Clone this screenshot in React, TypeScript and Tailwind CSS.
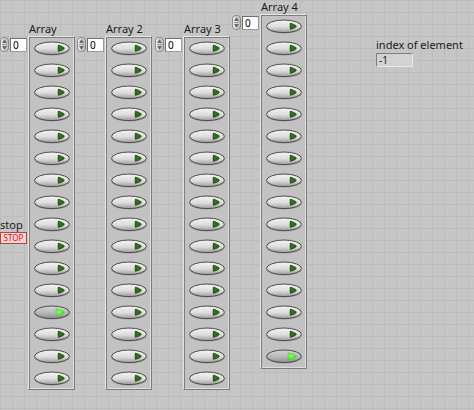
import React from "react";

const font = { fontFamily: '"Noto Sans", "DejaVu Sans", sans-serif' };

function LedDefs() {
  return (
    <svg width="0" height="0" className="absolute">
      <defs>
        <linearGradient id="ledBody" x1="0" y1="0" x2="0" y2="1">
          <stop offset="0" stopColor="#f4f4f4" />
          <stop offset="0.55" stopColor="#dcdcdc" />
          <stop offset="1" stopColor="#9c9c9c" />
        </linearGradient>
        <linearGradient id="ledBodyOn" x1="0" y1="0" x2="0" y2="1">
          <stop offset="0" stopColor="#d6d6d6" />
          <stop offset="0.6" stopColor="#b4b4b4" />
          <stop offset="1" stopColor="#8a8a8a" />
        </linearGradient>
        <radialGradient id="ledGreen" cx="0.4" cy="0.45" r="0.7">
          <stop offset="0" stopColor="#347a24" />
          <stop offset="1" stopColor="#1a4410" />
        </radialGradient>
        <radialGradient id="ledGreenOn" cx="0.4" cy="0.45" r="0.7">
          <stop offset="0" stopColor="#8dff6a" />
          <stop offset="1" stopColor="#28c814" />
        </radialGradient>
      </defs>
    </svg>
  );
}

function Led({ on }: { on?: boolean }) {
  return (
    <svg width="38" height="15" viewBox="0 0 38 15" className="block">
      <ellipse cx="19" cy="8" rx="18" ry="6.6" fill="#8e8e8e" opacity="0.6" />
      <ellipse
        cx="19"
        cy="7.3"
        rx="17.4"
        ry="6.3"
        fill={on ? "url(#ledBodyOn)" : "url(#ledBody)"}
        stroke="#4c4c4c"
        strokeWidth="1"
      />
      {on ? (
        <path d="M23 3.4 Q29 4 31.5 7.3 Q29 10.6 23 11.2 Q21.5 7.3 23 3.4Z" fill="url(#ledGreenOn)" />
      ) : (
        <path d="M25 3.8 Q30 4.8 31.8 7.3 Q30 9.8 25 10.8 Q24.2 7.3 25 3.8Z" fill="url(#ledGreen)" />
      )}
    </svg>
  );
}

function Spinner() {
  return (
    <div className="flex h-[15px] w-[9px] flex-col items-center justify-between rounded-[4px] border border-[#8a8a8a] bg-gradient-to-r from-[#f2f2f2] to-[#bdbdbd] py-[1px]">
      <svg width="5" height="4" viewBox="0 0 5 4">
        <path d="M2.5 0 L5 4 L0 4Z" fill="#6a6a6a" />
      </svg>
      <div className="h-px w-[5px] bg-[#9a9a9a]" />
      <svg width="5" height="4" viewBox="0 0 5 4">
        <path d="M0 0 L5 0 L2.5 4Z" fill="#6a6a6a" />
      </svg>
    </div>
  );
}

function IndexControl() {
  return (
    <div className="flex items-center gap-[1px]">
      <Spinner />
      <div className="flex h-[14px] w-[17px] items-center border border-[#9a9a9a] border-t-[#707070] border-l-[#707070] bg-white pl-[2px] text-[10px] leading-none text-black">
        0
      </div>
    </div>
  );
}

function ArrayFrame({ count, lit, height }: { count: number; lit: number; height: string }) {
  return (
    <div
      className={`flex w-[47px] flex-col items-center gap-[7px] border border-[#e6e6e6] border-r-[#7c7c7c] border-b-[#7c7c7c] bg-[#c2c2c2] pt-[4px] shadow-[inset_1px_1px_0_#7e7e7e,inset_-1px_-1px_0_#dedede] ${height}`}
    >
      {Array.from({ length: count }).map((_, i) => (
        <Led key={i} on={i === lit} />
      ))}
    </div>
  );
}

export default function App() {
  return (
    <div
      className="relative h-[410px] w-[474px] overflow-hidden bg-[#c6c6c6] bg-[linear-gradient(to_right,#bcbcbc_1px,transparent_1px),linear-gradient(to_bottom,#bcbcbc_1px,transparent_1px)] bg-[size:12px_12px] text-[11px] text-[#1a1a1a]"
      style={font}
    >
      <LedDefs />

      {/* Array */}
      <div className="absolute left-0 top-[22px] flex items-start">
        <div className="mt-[15px]">
          <IndexControl />
        </div>
        <div className="ml-[1px] flex flex-col">
          <span className="pl-[1px] leading-[14px]">Array</span>
          <ArrayFrame count={16} lit={12} height="h-[354px]" />
        </div>
      </div>

      {/* Array 2 */}
      <div className="absolute left-[77px] top-[22px] flex items-start">
        <div className="mt-[15px]">
          <IndexControl />
        </div>
        <div className="ml-[1px] flex flex-col">
          <span className="pl-[1px] leading-[14px]">Array 2</span>
          <ArrayFrame count={16} lit={-1} height="h-[354px]" />
        </div>
      </div>

      {/* Array 3 */}
      <div className="absolute left-[155px] top-[22px] flex items-start">
        <div className="mt-[15px]">
          <IndexControl />
        </div>
        <div className="ml-[1px] flex flex-col">
          <span className="pl-[1px] leading-[14px]">Array 3</span>
          <ArrayFrame count={16} lit={-1} height="h-[354px]" />
        </div>
      </div>

      {/* Array 4 */}
      <div className="absolute left-[232px] top-0 flex items-start">
        <div className="mt-[15px]">
          <IndexControl />
        </div>
        <div className="ml-[1px] flex flex-col">
          <span className="pl-[1px] leading-[14px]">Array 4</span>
          <ArrayFrame count={16} lit={15} height="h-[355px]" />
        </div>
      </div>

      {/* index of element */}
      <div className="absolute left-[376px] top-[38px] flex flex-col gap-[1px]">
        <span className="leading-[14px]">index of element</span>
        <div className="flex h-[14px] w-[37px] items-center border border-[#e8e8e8] border-t-[#808080] border-l-[#808080] bg-[#d2d2d2] pl-[2px] text-[10px] leading-none">
          -1
        </div>
      </div>

      {/* stop */}
      <div className="absolute left-0 top-[218px] flex flex-col">
        <span className="leading-[14px]">stop</span>
        <div className="flex h-[12px] w-[27px] items-center justify-center border border-[#c04040] bg-[#f0d4d4] text-[8px] leading-none text-[#d01818]">
          STOP
        </div>
      </div>
    </div>
  );
}
